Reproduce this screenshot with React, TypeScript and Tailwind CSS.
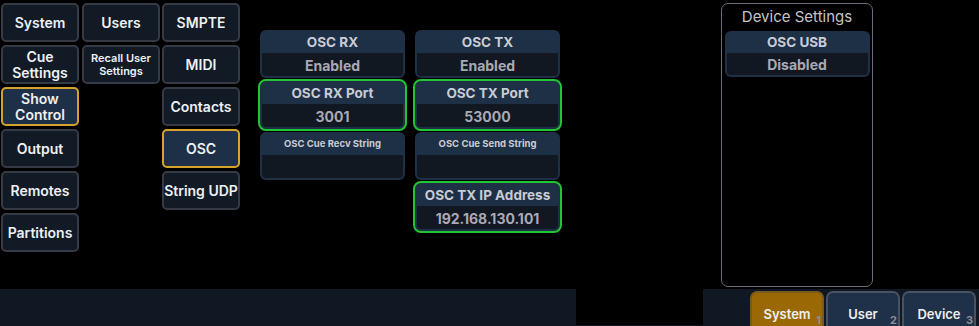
import React from 'react';

const font = { fontFamily: 'Inter, "Liberation Sans", sans-serif' };

interface NavButtonProps {
    label: React.ReactNode;
    selected?: boolean;
    small?: boolean;
}

const NavButton: React.FC<NavButtonProps> = ({ label, selected, small }) => (
    <div
        className={`flex h-[39px] w-[78px] items-center justify-center rounded-[5px] border-2 text-center font-semibold text-[#eef0f3] ${
            selected ? 'border-[#d5a22c] bg-[#1e3048]' : 'border-[#353a46] bg-[#121a25]'
        } ${small ? 'text-[11px] leading-[13px]' : 'text-[14px] leading-[16px]'}`}
    >
        {label}
    </div>
);

interface OscCellProps {
    label: string;
    value?: string;
    active?: boolean;
    small?: boolean;
}

const OscCell: React.FC<OscCellProps> = ({ label, value, active, small }) => (
    <div
        className={`flex h-[48px] w-[145px] flex-col rounded-[6px] bg-[#1e3046] ${
            active ? 'outline-2 outline-[#22c534]' : ''
        }`}
    >
        <div
            className={`flex h-[23px] items-center justify-center pt-[1px] font-bold text-[#c9ccd4] ${
                small ? 'text-[9.5px]' : 'text-[13.5px]'
            }`}
        >
            {label}
        </div>
        <div className="mx-[2px] mb-[2px] flex flex-1 items-center justify-center rounded-b-[4px] bg-[#111822] pt-[2px] text-[14px] font-bold text-[#a9a9b5]">
            {value}
        </div>
    </div>
);

const Tab: React.FC<{ label: string; num: string; selected?: boolean }> = ({ label, num, selected }) => (
    <div
        className={`relative h-[40px] w-[74px] rounded-t-[7px] border-2 border-b-0 ${
            selected ? 'border-[#7a5a1e] bg-[#9a6906]' : 'border-[#4a5161] bg-[#1f3148]'
        }`}
    >
        <div className="pt-[12px] text-center text-[13px] font-semibold text-[#eef0f3]">{label}</div>
        <span className="absolute right-[1px] top-[22px] text-[11px] leading-[11px] font-bold text-[#8c8d98]">{num}</span>
    </div>
);

export default function App() {
    return (
        <div className="flex h-[326px] w-[979px] flex-col overflow-hidden bg-black" style={font}>
            <div className="flex h-[289px]">
                {/* left menu */}
                <div className="ml-[1px] mt-[3px] flex">
                    <div className="flex flex-col gap-[3px]">
                        <NavButton label="System" />
                        <NavButton label={<>Cue<br />Settings</>} />
                        <NavButton label={<>Show<br />Control</>} selected />
                        <NavButton label="Output" />
                        <NavButton label="Remotes" />
                        <NavButton label="Partitions" />
                    </div>
                    <div className="ml-[3px] flex flex-col gap-[3px]">
                        <NavButton label="Users" />
                        <NavButton label={<>Recall User<br />Settings</>} small />
                    </div>
                    <div className="ml-[2px] flex flex-col gap-[3px]">
                        <NavButton label="SMPTE" />
                        <NavButton label="MIDI" />
                        <NavButton label="Contacts" />
                        <NavButton label="OSC" selected />
                        <NavButton label="String UDP" />
                    </div>
                </div>

                {/* osc settings */}
                <div className="ml-[20px] mt-[30px] flex gap-[10px]">
                    <div className="flex flex-col gap-[3px]">
                        <OscCell label="OSC RX" value="Enabled" />
                        <OscCell label="OSC RX Port" value="3001" active />
                        <OscCell label="OSC Cue Recv String" small />
                    </div>
                    <div className="flex flex-col gap-[3px]">
                        <OscCell label="OSC TX" value="Enabled" />
                        <OscCell label="OSC TX Port" value="53000" active />
                        <OscCell label="OSC Cue Send String" small />
                        <OscCell label="OSC TX IP Address" value="192.168.130.101" active />
                    </div>
                </div>

                {/* device settings */}
                <div className="ml-[161px] mt-[3px] flex h-[284px] w-[152px] flex-col items-center rounded-[7px] border-[1.5px] border-[#6d6d77] px-[2px]">
                    <div className="mt-[1px] h-[24px] text-[15px] leading-[24px] text-[#c3c4cc]">Device Settings</div>
                    <div className="mt-[2px]">
                        <div className="flex h-[46px] w-[145px] flex-col rounded-[6px] bg-[#1e3046]">
                            <div className="flex h-[22px] items-center justify-center pt-[1px] text-[13.5px] font-bold text-[#c9ccd4]">OSC USB</div>
                            <div className="mx-[2px] mb-[2px] flex flex-1 items-center justify-center rounded-b-[4px] bg-[#111822] pt-[1px] text-[14px] font-bold text-[#a9a9b5]">
                                Disabled
                            </div>
                        </div>
                    </div>
                </div>
            </div>

            {/* bottom bar */}
            <div className="flex h-[37px]">
                <div className="w-[576px] bg-[#101823]" />
                <div className="w-[127px] border-b border-[#101823]" />
                <div className="flex flex-1 gap-[2px] bg-[#101823] pl-[47px] pt-[2px]">
                    <Tab label="System" num="1" selected />
                    <Tab label="User" num="2" />
                    <Tab label="Device" num="3" />
                </div>
            </div>
        </div>
    );
}
